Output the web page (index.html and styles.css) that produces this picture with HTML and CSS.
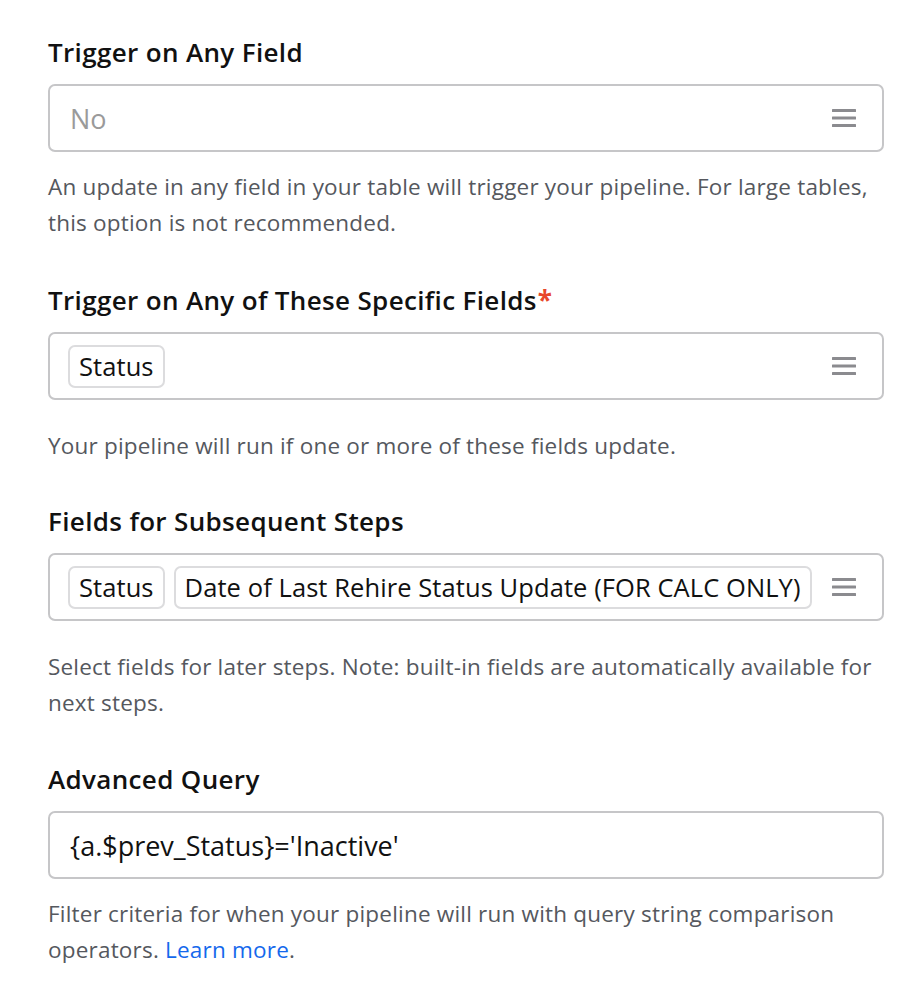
FILE: index.html
```html
<!DOCTYPE html>
<html lang="en">
<head>
<meta charset="utf-8">
<title>Trigger settings</title>
<link rel="stylesheet" href="styles.css">
</head>
<body>
<div class="form">
  <section class="field field-first">
    <div class="label">Trigger on Any Field</div>
    <div class="box">
      <span class="placeholder">No</span>
      <svg class="menu" width="24" height="19" viewBox="0 0 24 19"><rect x="0" y="0" width="24" height="3" rx="0.5"/><rect x="0" y="7.5" width="24" height="3" rx="0.5"/><rect x="0" y="15" width="24" height="3" rx="0.5"/></svg>
    </div>
    <p class="help">An update in any field in your table will trigger your pipeline. For large tables, this option is not recommended.</p>
  </section>

  <section class="field field-second">
    <div class="label">Trigger on Any of These Specific Fields<span class="req">*</span></div>
    <div class="box box-chips">
      <span class="chip">Status</span>
      <svg class="menu" width="24" height="19" viewBox="0 0 24 19"><rect x="0" y="0" width="24" height="3" rx="0.5"/><rect x="0" y="7.5" width="24" height="3" rx="0.5"/><rect x="0" y="15" width="24" height="3" rx="0.5"/></svg>
    </div>
    <p class="help help-multi">Your pipeline will run if one or more of these fields update.</p>
  </section>

  <section class="field field-third">
    <div class="label">Fields for Subsequent Steps</div>
    <div class="box box-chips">
      <span class="chip">Status</span>
      <span class="chip">Date of Last Rehire Status Update (FOR CALC ONLY)</span>
      <svg class="menu" width="24" height="19" viewBox="0 0 24 19"><rect x="0" y="0" width="24" height="3" rx="0.5"/><rect x="0" y="7.5" width="24" height="3" rx="0.5"/><rect x="0" y="15" width="24" height="3" rx="0.5"/></svg>
    </div>
    <p class="help help-multi">Select fields for later steps. Note: built-in fields are automatically available for next steps.</p>
  </section>

  <section class="field field-fourth">
    <div class="label">Advanced Query</div>
    <div class="box">
      <span class="value">{a.$prev_Status}='Inactive'</span>
    </div>
    <p class="help">Filter criteria for when your pipeline will run with query string comparison operators. <a class="link" href="#">Learn more</a>.</p>
  </section>
</div>
</body>
</html>
```

FILE: styles.css
```css
html, body {
  margin: 0;
  padding: 0;
  background: #ffffff;
}

body {
  font-family: "Open Sans", "Liberation Sans", sans-serif;
  color: #111111;
}

.form {
  width: 836px;
  padding: 36px 0 0 48px;
}

.field-second { margin-top: 43px; }
.field-third { margin-top: 41px; }
.field-fourth { margin-top: 42px; }

.label {
  font-size: 26px;
  line-height: 32px;
  font-weight: 600;
  letter-spacing: 0.35px;
  color: #111111;
  margin-bottom: 16px;
}

.req {
  color: #e8472b;
  font-weight: 700;
  margin-left: 1px;
}

.box {
  box-sizing: border-box;
  height: 68px;
  border: 2px solid #c6c6c8;
  border-radius: 7px;
  display: flex;
  align-items: center;
  padding: 0 26px 0 20px;
  gap: 9px;
}

.box-chips {
  padding-left: 18px;
}

.placeholder {
  font-size: 27px;
  color: #9a9a9a;
}

.value {
  font-size: 27px;
  color: #111111;
}

.chip {
  box-sizing: border-box;
  height: 43px;
  display: inline-flex;
  align-items: center;
  padding: 0 9px;
  border: 2px solid #dcdcde;
  border-radius: 7px;
  font-size: 25.5px;
  letter-spacing: 0.08px;
  color: #111111;
  white-space: nowrap;
}

.menu {
  margin-left: auto;
  flex: none;
  fill: #8b8b8f;
}

.help {
  margin: 17px -16px 0 0;
  font-size: 22.5px;
  letter-spacing: 0.2px;
  line-height: 36px;
  color: #55585e;
}

.help-multi {
  margin-top: 28px;
}

.link {
  color: #1468ec;
  text-decoration: none;
}
```
